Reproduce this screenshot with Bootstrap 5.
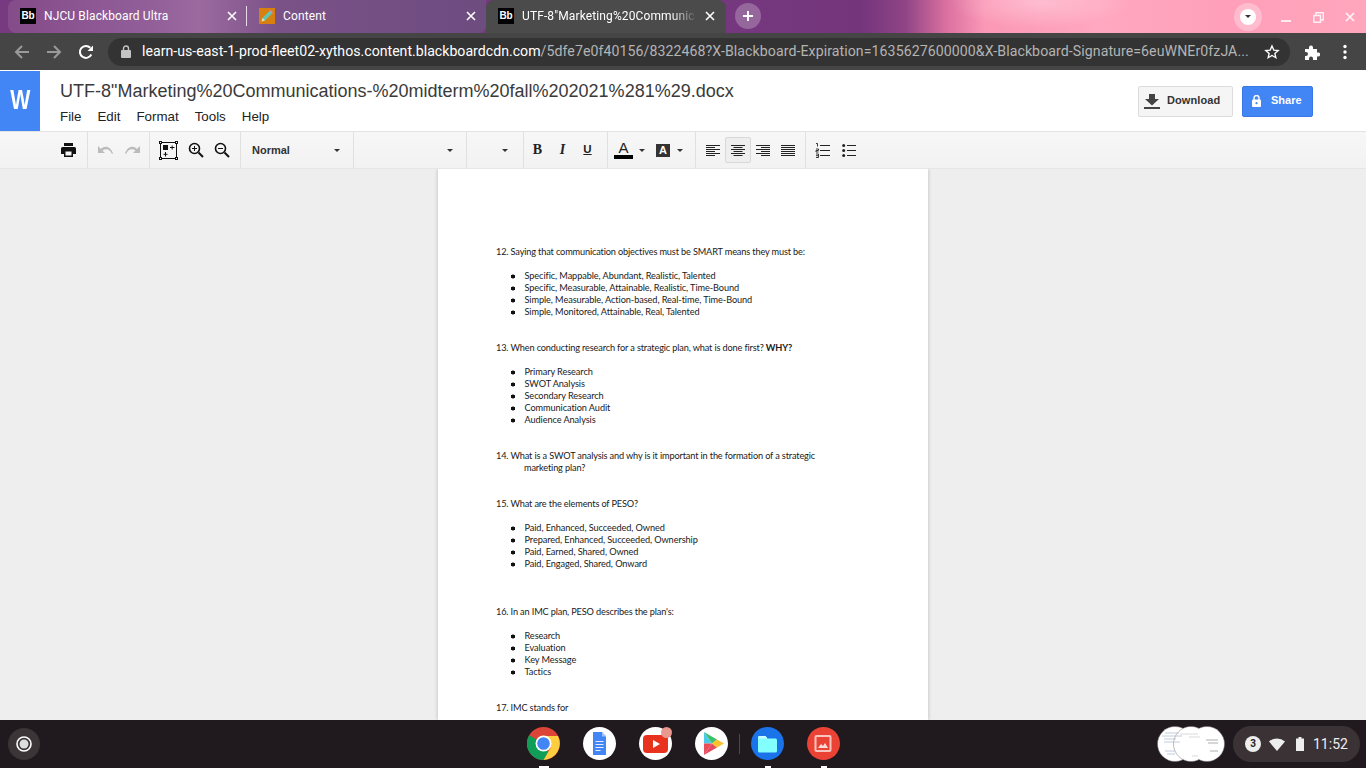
<!DOCTYPE html>
<html lang="en">
<head>
<meta charset="utf-8">
<title>UTF-8"Marketing%20Communications</title>
<link href="https://cdn.jsdelivr.net/npm/bootstrap@5.3.0/dist/css/bootstrap.min.css" rel="stylesheet">
<style>
html,body{height:100%;overflow:hidden;margin:0}
body{width:1366px;height:768px;font-family:"Liberation Sans",Arial,sans-serif;background:#eee}
.shell{height:768px}
/* browser chrome */
.tabstrip{height:33px;background:radial-gradient(ellipse 90px 26px at 1040px 2px,rgba(255,225,235,.45),transparent),linear-gradient(90deg,#77397f 0,#75387e 726px,#74357b 860px,#8f4486 905px,#d96f9f 945px,#fb98b6 985px,#ffa8c0 1100px,#ff9fb9 1230px,#ffa6bd 1366px);padding-left:8px;font-family:Roboto,sans-serif;font-size:12px;color:#fff}
.inactive-tabs{width:478px;height:33px;background:linear-gradient(90deg,#844c89 0,#93609a 150px,#9c6a9f 190px,#7a5288 270px,#6d4c80 478px);border-radius:8px 0 8px 8px}
.tabx{width:239px;height:33px;padding:0 10px 1px 12px;position:relative}
.tab-active{width:240px;height:33px;background:#4b4b4b;border-radius:8px 8px 0 0;padding:0 11px 1px 12px}
.tabname{flex:1;white-space:nowrap;overflow:hidden;font-size:12px;letter-spacing:.12px;padding-left:8px;min-width:0}
.fade-name{-webkit-mask-image:linear-gradient(90deg,#000 86%,transparent 100%);mask-image:linear-gradient(90deg,#000 86%,transparent 100%)}
.bbicon{width:16px;height:16px;background:#000;color:#fff;font:700 10px/16px "Liberation Sans",sans-serif;text-align:center;flex:none;letter-spacing:-.2px}
.tabsep{width:1px;height:20px;background:#e9dcea;position:absolute;right:0;top:6px}
.closex{flex:none}
.newtab{width:26px;height:26px;border-radius:50%;background:rgba(255,255,255,.24);margin:3px 0 0 9px}
.winarea{height:33px}
.avatar-ring{width:28px;height:28px;border-radius:50%;background:rgba(255,255,255,.3);margin-right:8px}
.avatar-dot{width:16px;height:16px;border-radius:50%;background:#fff}
.avatar-caret{border-left-width:4px;border-right-width:4px;border-top:5px solid #9a7480}
.winbtn{width:32px;text-align:center}
.addrbar{height:37px;background:#454545;padding:0 0 0 6px}
.navbtn{width:32px;height:32px}
.omni{width:1182px;height:28px;margin-left:6px;background:#333;border-radius:14px;padding:0 10px 0 13px;font-family:Roboto,sans-serif;font-size:14.15px;color:#fff;white-space:nowrap}
.omni .dimtxt{color:#b4b4b4;letter-spacing:.07px}
.urltxt{flex:1;overflow:hidden;padding-left:11px;min-width:0}
.staricon{flex:none;margin-left:14px}
.exticon{margin-right:23px}
.kebab{margin-right:19px}
/* viewer header */
.wbadge{width:40px;height:60px;background:#4285f4;color:#fff;font:700 28px/58px "Liberation Sans",sans-serif;text-align:center}
.wglyph{display:inline-block;transform:scaleX(.76)}
.apphead{height:62px;background:#fff;border-bottom:1px solid #e3e3e3;padding-top:1px}
.doctitle{font-size:18px;line-height:24px;color:#3a3a3a;padding:8px 0 0 20px;margin:0;font-weight:400}
.menurow{padding-left:20px;padding-top:5px;font-size:13.33px;line-height:18px;color:#222}
.menurow span{margin-right:16px}
.btn.act-dl,.btn.act-sh{height:31px;font:700 11px/1 "Liberation Sans",sans-serif;border-radius:2px;display:flex;align-items:center;justify-content:flex-start;padding-bottom:2px}
.btn.act-dl{width:95px;background:#f5f5f5;border:1px solid #dcdcdc;color:#333;gap:7px;padding:0 0 2px 5px;letter-spacing:.1px}
.btn.act-dl svg{margin-top:2px}
.btn.act-sh{width:71px;margin-left:9px;margin-right:53px;background:#4285f4;border:1px solid #3b78e7;color:#fff;gap:10px;padding:0 0 2px 9px}
.acts{padding-top:15px}
/* toolbar */
.tbar{height:37px;background:linear-gradient(#f7f7f7,#f2f2f2);border-bottom:1px solid #e6e6e6;color:#222}
.tgroup{height:100%;border-right:1px solid #e0e0e0;flex:none}
.g-print{width:88px;padding-left:61px}
.g-undo{width:62px;padding-left:10px;gap:12px}
.g-zoom{width:91px;padding-left:9px}
.zoomin{margin:0 10px 0 10px}
.g-style{width:113px;padding:0 13px 0 11px}
.g-font{width:113px;padding-right:13px}
.g-size{width:57px;padding-right:15px}
.g-bold{width:84px;padding-left:1px}
.g-color{width:88px;padding-left:6px}
.g-align{width:110px;padding-left:10px}
.g-lists{padding-left:9px;gap:12px}
.tsel{font:700 11px/1 "Liberation Sans",sans-serif;color:#333}
.caret-d{width:0;height:0;border-left:3px solid transparent;border-right:3px solid transparent;border-top:3px solid #333;display:inline-block}
.tletter{width:25px;text-align:center;font:700 11.5px/1 "Liberation Sans",sans-serif;color:#222}
.tletter-b{font:900 14px/1 "Liberation Serif",serif}
.tletter-i{font:italic 700 14px/1 "Liberation Serif",serif}
.fgcolor{width:19px}
.fgletter{font:400 15px/14px "Liberation Sans",sans-serif;color:#222}
.fgbar{display:block;width:19px;height:4px;background:#000}
.mcaret1{margin-left:6px}
.bgbox{width:14px;height:13px;margin:0 7px 0 11px;background:#333;color:#fff;font:700 11px/13px "Liberation Sans",sans-serif;text-align:center}
.tactive{width:26px;height:26px;background:#eee;border:1px solid #d8d8d8;border-radius:2px;margin-left:5px}
.al-r{margin-left:5px}
.al-j{margin-left:11px}
/* document */
.viewer{flex:1;background:#eee;overflow:hidden;min-height:0}
.sheet{width:490px;margin-left:438px;height:100%;background:#fff;box-shadow:0 0 4px rgba(0,0,0,.22);padding:77px 0 0 58px;font-family:Lato,"Open Sans",sans-serif;font-size:9.2px;letter-spacing:-.15px;line-height:12px;color:#1a1a1a;overflow:hidden}
.sheet p{margin:0}
.sheet ul{margin:12px 0 0;padding:0 0 0 28px;list-style:none}
.sheet li{margin-left:-14px;padding-left:14.500px;letter-spacing:-.09px;background:radial-gradient(circle 2.200px at 3px 6.500px,#111 85%,transparent) no-repeat}
.sheet p.qhang{padding-left:28px;text-indent:-28px;width:335px}
.sheet p.gap2{margin-top:24px}
.sheet p.gap3{margin-top:36px}
/* shelf */
.shelf{height:48px;background:#201a1e;flex:none;position:relative}
.launcher{width:32px;height:32px;border-radius:50%;background:#3b3538;margin-left:8px}
.dock{position:absolute;left:527px;top:7px;gap:23px}
.dockitem{width:33px;height:33px;position:relative;flex:none}
.dockitem svg{display:block}
.running::after{content:"";position:absolute;bottom:-8px;left:50%;width:6px;height:2px;margin-left:-3px;background:#fff}
.running-w::after{width:10px;margin-left:-5px}
.docksep{width:1px;height:20px;background:#4e484b;margin:7px -12px 0}
.notifydot{position:absolute;right:0;top:0;width:11px;height:11px;background:#e8988c;border-radius:50%}
.totes{width:70px;height:36px;margin-right:7px}
.pill{width:127px;height:36px;background:#3a3235;border-radius:18px;margin-right:6px;color:#eee;font:14px Roboto,sans-serif;padding-left:12px}
.num3{width:16px;height:16px;border-radius:50%;background:#eee;color:#222;font:700 10px/16px Roboto,sans-serif;text-align:center}
.batt{margin-left:11px}
.clock{margin-left:9px}
</style>
</head>
<body>
<div class="shell d-flex flex-column">

  <div class="tabstrip d-flex align-items-start">
    <div class="inactive-tabs d-flex">
      <div class="tabx d-flex align-items-center">
        <div class="bbicon">Bb</div><div class="tabname">NJCU Blackboard Ultra</div>
        <svg class="closex" width="10" height="10" viewBox="0 0 10 10"><path d="M1 1l8 8M9 1l-8 8" stroke="#fff" stroke-width="1.600"/></svg>
        <div class="tabsep"></div>
      </div>
      <div class="tabx d-flex align-items-center">
        <svg width="16" height="16" viewBox="0 0 16 16" class="flex-none"><rect width="16" height="16" fill="#d8800f"/><path d="M2.500 13.500l1-3.500 7-7 2.500 2.500-7 7z" fill="#5fc6b8"/><path d="M10.500 3l1-1 2.500 2.500-1 1z" fill="#c78fc4"/><path d="M2.500 13.500l1-3.500 2.500 2.500z" fill="#f3e0b0"/></svg>
        <div class="tabname">Content</div>
        <svg class="closex" width="10" height="10" viewBox="0 0 10 10"><path d="M1 1l8 8M9 1l-8 8" stroke="#fff" stroke-width="1.600"/></svg>
      </div>
    </div>
    <div class="tab-active d-flex align-items-center">
      <div class="bbicon">Bb</div><div class="tabname fade-name">UTF-8"Marketing%20Communic</div>
      <svg class="closex ms-2" width="10" height="10" viewBox="0 0 10 10"><path d="M1 1l8 8M9 1l-8 8" stroke="#fff" stroke-width="1.600"/></svg>
    </div>
    <div class="newtab d-flex align-items-center justify-content-center">
      <svg width="12" height="12" viewBox="0 0 12 12"><path d="M6 1v10M1 6h10" stroke="#fff" stroke-width="2"/></svg>
    </div>
    <div class="winarea ms-auto d-flex align-items-center">
      <div class="avatar-ring d-flex align-items-center justify-content-center">
        <div class="avatar-dot d-flex align-items-center justify-content-center"><span class="caret-d avatar-caret"></span></div>
      </div>
      <div class="winbtn"><svg width="10" height="10" viewBox="0 0 10 10"><path d="M0 9h10" stroke="#fff" stroke-opacity=".8" stroke-width="2"/></svg></div>
      <div class="winbtn"><svg width="11" height="11" viewBox="0 0 11 11"><path d="M3 3V.7h7.300V8H8M.8 3.500h6.700v6.700H.8z" fill="none" stroke="#fff" stroke-opacity=".85" stroke-width="1.400"/></svg></div>
      <div class="winbtn"><svg width="10" height="10" viewBox="0 0 10 10"><path d="M1 1l8 8M9 1l-8 8" stroke="#fff" stroke-opacity=".9" stroke-width="1.600"/></svg></div>
    </div>
  </div>

  <div class="addrbar d-flex align-items-center">
    <div class="navbtn d-flex align-items-center justify-content-center"><svg width="16" height="16" viewBox="0 0 16 16"><path d="M15 8H2M8 2L2 8l6 6" fill="none" stroke="#9a9a9a" stroke-width="2"/></svg></div>
    <div class="navbtn d-flex align-items-center justify-content-center"><svg width="16" height="16" viewBox="0 0 16 16"><path d="M1 8h13M8 2l6 6-6 6" fill="none" stroke="#9a9a9a" stroke-width="2"/></svg></div>
    <div class="navbtn d-flex align-items-center justify-content-center"><svg width="16" height="16" viewBox="0 0 16 16"><path d="M13.300 10.500A6 6 0 1 1 12.300 3.800" fill="none" stroke="#fff" stroke-width="2"/><path d="M15 1.500V7H9.500z" fill="#fff"/></svg></div>
    <div class="omni d-flex align-items-center">
      <svg width="10" height="13" viewBox="0 0 10 13" class="flex-none"><rect y="5" width="10" height="8" rx="1" fill="#c4c4c4"/><path d="M2.500 5V3.500a2.500 2.500 0 0 1 5 0V5" fill="none" stroke="#c4c4c4" stroke-width="1.400"/></svg>
      <div class="urltxt">learn-us-east-1-prod-fleet02-xythos.content.blackboardcdn.com<span class="dimtxt">/5dfe7e0f40156/8322468?X-Blackboard-Expiration=1635627600000&amp;X-Blackboard-Signature=6euWNEr0fzJA...</span></div>
      <svg width="16" height="16" viewBox="0 0 24 24" class="staricon"><path d="M12 3l2.700 6.100 6.600.6-5 4.400 1.500 6.500L12 17.200l-5.800 3.400 1.500-6.500-5-4.400 6.600-.6z" fill="none" stroke="#fff" stroke-width="2"/></svg>
    </div>
    <div class="ms-auto d-flex align-items-center">
      <svg width="16" height="16" viewBox="0 0 16 16" class="exticon"><path d="M1 5h4V3.500a2 2 0 0 1 4 0V5h4v3.500h1.200a2 2 0 0 1 0 4H13V16H9v-1.500a2 2 0 0 0-4 0V16H1v-4h1a2 2 0 0 0 0-4H1z" fill="#fff"/></svg>
      <svg width="4" height="16" viewBox="0 0 4 16" class="kebab"><circle cx="2" cy="2.500" r="1.700" fill="#fff"/><circle cx="2" cy="8" r="1.700" fill="#fff"/><circle cx="2" cy="13.500" r="1.700" fill="#fff"/></svg>
    </div>
  </div>

  <div class="apphead d-flex">
    <div class="wbadge"><span class="wglyph">W</span></div>
    <div class="flex-grow-1">
      <h1 class="doctitle">UTF-8"Marketing%20Communications-%20midterm%20fall%202021%281%29.docx</h1>
      <div class="menurow"><span>File</span><span>Edit</span><span>Format</span><span>Tools</span><span>Help</span></div>
    </div>
    <div class="acts d-flex align-items-start">
      <button type="button" class="btn act-dl"><svg width="16" height="15" viewBox="0 0 16 15"><path d="M5 0h6v5h4l-7 6.500L1 5h4z" fill="#444"/><rect y="13" width="16" height="2" fill="#444"/></svg>Download</button>
      <button type="button" class="btn act-sh"><svg width="9" height="12" viewBox="0 0 9 12"><rect y="4.500" width="9" height="7.500" rx="1" fill="#fff"/><path d="M2 5V3a2.500 2.500 0 0 1 5 0v2" fill="none" stroke="#fff" stroke-width="1.400"/><circle cx="4.500" cy="8.200" r="1.100" fill="#4285f4"/></svg>Share</button>
    </div>
  </div>

  <div class="tbar d-flex align-items-center">
    <div class="tgroup g-print d-flex align-items-center">
      <svg width="15" height="14" viewBox="0 0 15 14"><path d="M3 0h9v3H3zM1.500 4h12A1.500 1.500 0 0 1 15 5.500V11h-3v3H3v-3H0V5.500A1.500 1.500 0 0 1 1.500 4z" fill="#111"/><rect x="4.500" y="8.500" width="6" height="4" fill="#f5f5f5"/></svg>
    </div>
    <div class="tgroup g-undo d-flex align-items-center">
      <svg width="15" height="9" viewBox="0 0 15 9"><path d="M0 0v7h7L4.500 4.500C8 2 12 3 14 8l1-.5C13 1 7-1.500 3 3z" fill="#bbb"/></svg>
      <svg width="15" height="9" viewBox="0 0 15 9"><path d="M15 0v7H8l2.500-2.500C7 2 3 3 1 8L0 7.500C2 1 8-1.500 12 3z" fill="#bbb"/></svg>
    </div>
    <div class="tgroup g-zoom d-flex align-items-center">
      <svg width="19" height="19" viewBox="0 0 19 19"><rect x="1.500" y="1.500" width="16" height="16" fill="none" stroke="#111"/><g fill="#fff" stroke="#111"><rect x=".5" y=".5" width="2" height="2"/><rect x="16.500" y=".5" width="2" height="2"/><rect x=".5" y="16.500" width="2" height="2"/><rect x="16.500" y="16.500" width="2" height="2"/></g><rect x="4" y="4" width="5" height="5" fill="#111"/><path d="M11 6.500h4.500M13.200 4.500v4M6.500 11v4.500M4.500 13.300h4" stroke="#111"/></svg>
      <svg width="16" height="16" viewBox="0 0 16 16" class="zoomin"><circle cx="6.500" cy="6.500" r="5" fill="none" stroke="#111" stroke-width="1.600"/><path d="M10.500 10.500L15 15" stroke="#111" stroke-width="2"/><path d="M4 6.500h5M6.500 4v5" stroke="#111"/></svg>
      <svg width="16" height="16" viewBox="0 0 16 16"><circle cx="6.500" cy="6.500" r="5" fill="none" stroke="#111" stroke-width="1.600"/><path d="M10.500 10.500L15 15" stroke="#111" stroke-width="2"/><path d="M4 6.500h5" stroke="#111"/></svg>
    </div>
    <div class="tgroup g-style d-flex align-items-center justify-content-between tsel">Normal <span class="caret-d"></span></div>
    <div class="tgroup g-font d-flex align-items-center justify-content-end"><span class="caret-d"></span></div>
    <div class="tgroup g-size d-flex align-items-center justify-content-end"><span class="caret-d"></span></div>
    <div class="tgroup g-bold d-flex align-items-center">
      <span class="tletter tletter-b">B</span>
      <span class="tletter tletter-i">I</span>
      <span class="tletter text-decoration-underline">U</span>
    </div>
    <div class="tgroup g-color d-flex align-items-center">
      <div class="fgcolor d-flex flex-column align-items-center"><span class="fgletter">A</span><span class="fgbar"></span></div>
      <span class="caret-d mcaret1"></span>
      <span class="bgbox">A</span>
      <span class="caret-d"></span>
    </div>
    <div class="tgroup g-align d-flex align-items-center">
      <svg width="14" height="11" viewBox="0 0 14 11"><path d="M0 .5h14M0 2.500h9M0 4.500h14M0 6.500h9M0 8.500h14M0 10.500h9" stroke="#222"/></svg>
      <div class="tactive d-flex align-items-center justify-content-center"><svg width="14" height="11" viewBox="0 0 14 11"><path d="M0 .5h14M2.500 2.500h9M0 4.500h14M2.500 6.500h9M0 8.500h14M2.500 10.500h9" stroke="#222"/></svg></div>
      <svg width="14" height="11" viewBox="0 0 14 11" class="al-r"><path d="M0 .5h14M5 2.500h9M0 4.500h14M5 6.500h9M0 8.500h14M5 10.500h9" stroke="#222"/></svg>
      <svg width="14" height="11" viewBox="0 0 14 11" class="al-j"><path d="M0 .5h14M0 2.500h14M0 4.500h14M0 6.500h14M0 8.500h14M0 10.500h14" stroke="#222"/></svg>
    </div>
    <div class="g-lists d-flex align-items-center">
      <svg width="15" height="15" viewBox="0 0 15 15"><path d="M5 2.500h10M5 7.500h10M5 12.500h10" stroke="#222" stroke-width="1.200"/><path d="M1 .5h1.500v3M1 6h2.500v1.500H1V9h2.500M1 11h2.500v3.500H1M1 12.700h2" fill="none" stroke="#222" stroke-width=".9"/></svg>
      <svg width="14" height="13" viewBox="0 0 14 13"><path d="M5 1.500h9M5 6.500h9M5 11.500h9" stroke="#222" stroke-width="1.200"/><circle cx="1.700" cy="1.500" r="1.500" fill="#222"/><circle cx="1.700" cy="6.500" r="1.500" fill="#222"/><circle cx="1.700" cy="11.500" r="1.500" fill="#222"/></svg>
    </div>
  </div>

  <main class="viewer">
    <div class="sheet">
      <p>12. Saying that communication objectives must be SMART means they must be:</p>
      <ul>
        <li>Specific, Mappable, Abundant, Realistic, Talented</li>
        <li>Specific, Measurable, Attainable, Realistic, Time-Bound</li>
        <li>Simple, Measurable, Action-based, Real-time, Time-Bound</li>
        <li>Simple, Monitored, Attainable, Real, Talented</li>
      </ul>
      <p class="gap2">13. When conducting research for a strategic plan, what is done first? <b>WHY?</b></p>
      <ul>
        <li>Primary Research</li>
        <li>SWOT Analysis</li>
        <li>Secondary Research</li>
        <li>Communication Audit</li>
        <li>Audience Analysis</li>
      </ul>
      <p class="gap2 qhang">14. What is a SWOT analysis and why is it important in the formation of a strategic marketing plan?</p>
      <p class="gap2">15. What are the elements of PESO?</p>
      <ul>
        <li>Paid, Enhanced, Succeeded, Owned</li>
        <li>Prepared, Enhanced, Succeeded, Ownership</li>
        <li>Paid, Earned, Shared, Owned</li>
        <li>Paid, Engaged, Shared, Onward</li>
      </ul>
      <p class="gap3">16. In an IMC plan, PESO describes the plan's:</p>
      <ul>
        <li>Research</li>
        <li>Evaluation</li>
        <li>Key Message</li>
        <li>Tactics</li>
      </ul>
      <p class="gap2">17. IMC stands for</p>
    </div>
  </main>

  <footer class="shelf d-flex align-items-center">
    <div class="launcher d-flex align-items-center justify-content-center"><svg width="16" height="16" viewBox="0 0 16 16"><circle cx="8" cy="8" r="7" fill="none" stroke="#fff" stroke-width="1.600"/><circle cx="8" cy="8" r="4.500" fill="#ddd"/></svg></div>
    <div class="dock d-flex">
      <div class="dockitem running running-w"><svg width="33" height="33" viewBox="0 0 33 33"><circle cx="16.500" cy="16.500" r="16.500" fill="#db4437"/><path d="M2.200 25A16.500 16.500 0 0 1 2.200 8.300l14.300 8.200 7.300 12.700L16.500 33A16.500 16.500 0 0 1 2.200 25z" fill="#0f9d58"/><path d="M16.500 9H31A16.500 16.500 0 0 1 16.500 33l7.300-12.500z" fill="#ffcd40"/><circle cx="16.500" cy="16.500" r="8" fill="#fff"/><circle cx="16.500" cy="16.500" r="6.300" fill="#4285f4"/></svg></div>
      <div class="dockitem"><svg width="33" height="33" viewBox="0 0 33 33"><circle cx="16.500" cy="16.500" r="16.500" fill="#fff"/><path d="M10 5h9l4 4.500V28H10z" fill="#4285f4"/><path d="M19 5v4.500h4z" fill="#a1c2fa"/><path d="M12.500 14.500h8M12.500 17.500h8M12.500 20.500h8M12.500 23.500h5" stroke="#e3edfd" stroke-width="1.200"/></svg></div>
      <div class="dockitem"><svg width="33" height="33" viewBox="0 0 33 33"><circle cx="16.500" cy="16.500" r="16.500" fill="#fff"/><rect x="4" y="8" width="25" height="18" rx="4" fill="#e8321d"/><path d="M14 13l7 4-7 4z" fill="#fff"/></svg><span class="notifydot"></span></div>
      <div class="dockitem"><svg width="33" height="33" viewBox="0 0 33 33"><circle cx="16.500" cy="16.500" r="16.500" fill="#fff"/><path d="M9 5v11.500h8z" fill="#4ccbe8"/><path d="M9 28V16.500h8z" fill="#ea4e5b"/><path d="M9 5l13 7.500-5 4z" fill="#3dbf6e"/><path d="M9 28l13-7.500-5-4z" fill="#e64a5f"/><path d="M22 12.500l7 4-7 4-5-4z" fill="#fbc02d"/></svg></div>
      <div class="docksep"></div>
      <div class="dockitem running"><svg width="33" height="33" viewBox="0 0 33 33"><circle cx="16.500" cy="16.500" r="16.500" fill="#1a73e8"/><path d="M7 10.500a1.500 1.500 0 0 1 1.500-1.500h6l2 2.500h8A1.500 1.500 0 0 1 26 13v11a1.500 1.500 0 0 1-1.500 1.500h-16A1.500 1.500 0 0 1 7 24z" fill="#84ffff"/><path d="M7 10.500a1.500 1.500 0 0 1 1.500-1.500h6l2 2.500H7z" fill="#c7ffff"/></svg></div>
      <div class="dockitem running"><svg width="33" height="33" viewBox="0 0 33 33"><circle cx="16.500" cy="16.500" r="16.500" fill="#ea4335"/><rect x="8.500" y="9" width="15" height="15" rx="1" fill="none" stroke="#f9c5bf" stroke-width="2"/><path d="M11 21l3-4 2 2 2-3 3 5z" fill="#fbdcd8"/></svg></div>
    </div>
    <div class="ms-auto d-flex align-items-center">
      <div class="totes">
        <svg width="70" height="36" viewBox="0 0 70 36"><g fill="#fff" stroke="#6d676a" stroke-opacity=".45"><circle cx="19" cy="18" r="17.500"/><circle cx="35" cy="18" r="17.500"/></g><circle cx="51" cy="18" r="17.500" fill="#fff" stroke="#6d676a" stroke-opacity=".45"/><circle cx="35" cy="18" r="16.500" fill="#fff"/><path d="M9 7h14M6 10h20M8 13h12M8 16h16M9 25h10M11 28h8" stroke="#b3bdd0" stroke-width=".8"/><path d="M24 8h18M33 11h11M36 30h6" stroke="#cfcfcf" stroke-width=".8"/><path d="M50 14h12M52 17h10M54 25h8" stroke="#999" stroke-width=".8"/></svg>
      </div>
      <div class="pill d-flex align-items-center">
        <div class="num3">3</div>
        <svg width="16" height="13" viewBox="0 0 16 13" class="ms-2"><path d="M8 13L0 3.500A12 12 0 0 1 16 3.500z" fill="#eee"/></svg>
        <svg width="8" height="14" viewBox="0 0 8 14" class="batt"><path d="M2.500 0h3v1.500H8V14H0V1.500h2.500z" fill="#eee"/></svg>
        <span class="clock">11:52</span>
      </div>
    </div>
  </footer>
</div>
<script src="https://cdn.jsdelivr.net/npm/bootstrap@5.3.0/dist/js/bootstrap.bundle.min.js"></script>
</body>
</html>
